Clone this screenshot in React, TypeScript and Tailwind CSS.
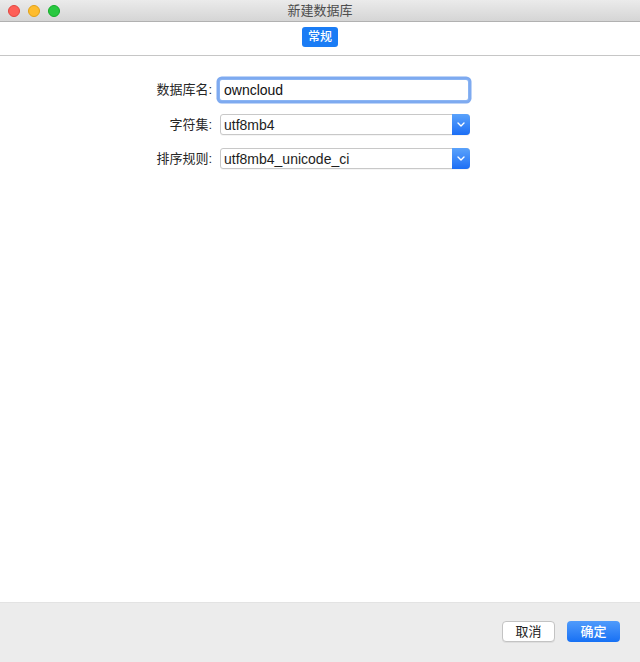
import React from "react";

const font = { fontFamily: '"Liberation Sans", "Noto Sans CJK SC", sans-serif' };

function Chevron() {
  return (
    <svg width="8" height="5" viewBox="0 0 8 5" fill="none">
      <path d="M1 1 L4 4 L7 1" stroke="white" strokeWidth="1.4" strokeLinecap="round" strokeLinejoin="round" />
    </svg>
  );
}

function Select({ value }: { value: string }) {
  return (
    <div className="flex h-[21px] w-[250px] items-stretch rounded-[3px] border border-[#c8c8c8] bg-white shadow-[0_1px_0_rgba(0,0,0,0.04)]">
      <div className="flex flex-1 items-center pl-[3px] text-[14px] leading-none text-[#1d1d1d]">{value}</div>
      <div className="-my-px -mr-px flex w-[18px] items-center justify-center rounded-r-[4px] bg-gradient-to-b from-[#5aa2fb] to-[#1b6ef5]">
        <Chevron />
      </div>
    </div>
  );
}

export default function App() {
  return (
    <div className="flex h-[662px] w-[640px] flex-col bg-white" style={font}>
      {/* Title bar */}
      <div className="relative flex h-[22px] shrink-0 items-center justify-center border-b border-[#b1b1b1] bg-gradient-to-b from-[#ebebeb] to-[#d5d5d5]">
        <div className="absolute left-[8px] top-[5px] flex gap-[8px]">
          <div className="h-[12px] w-[12px] rounded-full border border-[#e2463f] bg-[#fe5f57]" />
          <div className="h-[12px] w-[12px] rounded-full border border-[#e1a116] bg-[#febc2e]" />
          <div className="h-[12px] w-[12px] rounded-full border border-[#12ac28] bg-[#28c840]" />
        </div>
        <span className="text-[13px] text-[#4d4d4d]">新建数据库</span>
      </div>

      {/* Tab bar */}
      <div className="flex h-[34px] shrink-0 items-start justify-center border-b border-[#c6c6c6] pt-[5px]">
        <div className="flex h-[20px] w-[36px] items-center justify-center rounded-[3px] bg-[#1a7cf5] text-[12px] font-medium text-white">
          常规
        </div>
      </div>

      {/* Form */}
      <div className="flex flex-1 flex-col pt-[24px]">
        <div className="flex h-[20px] items-center">
          <div className="w-[212px] text-right text-[13px] text-[#262626]">数据库名:</div>
          <div className="ml-[8px] flex h-[20px] w-[248px] items-center rounded-[2px] bg-white pl-[4px] pt-[1px] text-[14px] text-[#111] shadow-[0_0_0_1px_#8ab4f3,0_0_0_3.5px_#7eaaf0]">
            owncloud
          </div>
        </div>
        <div className="mt-[14px] flex h-[21px] items-center">
          <div className="w-[212px] text-right text-[13px] text-[#262626]">字符集:</div>
          <div className="ml-[8px]">
            <Select value="utf8mb4" />
          </div>
        </div>
        <div className="mt-[13px] flex h-[21px] items-center">
          <div className="w-[212px] text-right text-[13px] text-[#262626]">排序规则:</div>
          <div className="ml-[8px]">
            <Select value="utf8mb4_unicode_ci" />
          </div>
        </div>
      </div>

      {/* Footer */}
      <div className="flex h-[60px] shrink-0 items-start justify-end gap-[12px] border-t border-[#e3e3e3] bg-[#ececec] pr-[20px] pt-[18px]">
        <div className="flex h-[21px] w-[53px] items-center justify-center rounded-[4px] border border-[#c3c3c3] bg-white text-[13px] text-[#222] shadow-[0_1px_0_rgba(0,0,0,0.06)]">
          取消
        </div>
        <div className="flex h-[21px] w-[53px] items-center justify-center rounded-[4px] bg-gradient-to-b from-[#4f9bfb] to-[#1570f4] text-[13px] font-medium text-white">
          确定
        </div>
      </div>
    </div>
  );
}
